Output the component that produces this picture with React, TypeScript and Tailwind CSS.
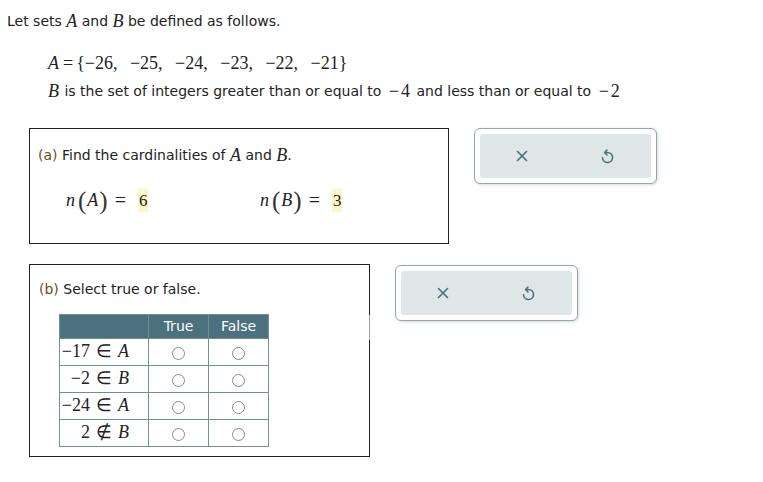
import React from 'react';

const sans = { fontFamily: '"DejaVu Sans", Verdana, sans-serif' };
const serif = { fontFamily: '"Liberation Serif", "Times New Roman", serif' };

function M({ children, italic = false, className = '' }: { children: React.ReactNode; italic?: boolean; className?: string }) {
  return (
    <span className={`text-[18px] leading-none ${italic ? 'italic' : ''} ${className}`} style={serif}>
      {children}
    </span>
  );
}

function Paren({ children }: { children: string }) {
  return (
    <span className="text-[25px] leading-none text-[#333]" style={serif}>
      {children}
    </span>
  );
}

function XIcon() {
  return (
    <svg width="12" height="12" viewBox="0 0 12 12" fill="none" stroke="#4b6f7a" strokeWidth="1.6" strokeLinecap="round">
      <path d="M1.5 1.5 10.5 10.5M10.5 1.5 1.5 10.5" />
    </svg>
  );
}

function UndoIcon() {
  return (
    <svg width="14" height="16" viewBox="0 0 14 16" fill="none" stroke="#4b6f7a" strokeWidth="1.6" strokeLinecap="round" strokeLinejoin="round">
      <path d="M5 4.5h2.5A5 5 0 1 1 2.5 9.8" />
      <path d="M7 2 4.6 4.5 7 7" />
    </svg>
  );
}

function ActionButtons({ className = '' }: { className?: string }) {
  return (
    <div className={`h-[56px] w-[183px] rounded-[6px] border border-[#92a7ae] bg-white p-[5px] shadow-[1px_1px_3px_rgba(0,0,0,0.15)] ${className}`}>
      <div className="flex h-full items-center rounded-[3px] bg-[#dfe6e8]">
        <div className="flex flex-1 justify-center">
          <XIcon />
        </div>
        <div className="flex flex-1 justify-center pr-[2px]">
          <UndoIcon />
        </div>
      </div>
    </div>
  );
}

function Radio() {
  return <span className="inline-block size-[13px] rounded-full border border-[#8a8a8a] bg-white" />;
}

function Cardinality({ set, value, className = '' }: { set: string; value: string; className?: string }) {
  return (
    <div className={`flex items-center ${className}`}>
      <M italic>n</M>
      <span className="ml-[3px]" />
      <Paren>(</Paren>
      <M italic className="mx-[1px]">{set}</M>
      <Paren>)</Paren>
      <span className="ml-[7px] mr-[12px] text-[20px] leading-none" style={serif}>=</span>
      <span className="bg-[#fdf6c9] px-[1px] py-[3px] text-[17px] leading-none" style={serif}>{value}</span>
    </div>
  );
}

const rows: { lhs: string; rel: string; set: string }[] = [
  { lhs: '−17', rel: '∈', set: 'A' },
  { lhs: '−2', rel: '∈', set: 'B' },
  { lhs: '−24', rel: '∈', set: 'A' },
  { lhs: '2', rel: '∉', set: 'B' },
];

export default function App() {
  return (
    <div className="h-[482px] w-[763px] bg-white text-[14px] text-[#222]" style={sans}>
      <div className="mt-[10px] flex h-[22px] items-center whitespace-pre pl-[7px]">
        <span>Let sets </span>
        <M italic>A</M>
        <span> and </span>
        <M italic>B</M>
        <span> be defined as follows.</span>
      </div>

      <div className="mt-[20px] flex h-[22px] items-center pl-[48px]">
        <M italic>A</M>
        <M className="ml-[4px]">=</M>
        <M className="ml-[3px] [word-spacing:8px]">{'{'}−26, −25, −24, −23, −22, −21{'}'}</M>
      </div>
      <div className="mt-[6px] flex h-[22px] items-center whitespace-pre pl-[48px]">
        <M italic>B</M>
        <span className="ml-[1px]"> is the set of integers greater than or equal to </span>
        <M className="ml-[3px]">−</M>
        <M className="ml-[2px]">4</M>
        <span className="ml-[2px]"> and less than or equal to </span>
        <M className="ml-[3px]">−</M>
        <M className="ml-[2px]">2</M>
      </div>

      <div className="mt-[26px] flex items-start gap-[25px] pl-[29px]">
        <div className="h-[116px] w-[420px] border border-[#222]">
          <div className="mt-[15px] flex h-[22px] items-center whitespace-pre pl-[8px]">
            <span className="text-[#6b4e12]">(a)</span>
            <span> Find the cardinalities of </span>
            <M italic>A</M>
            <span> and </span>
            <M italic>B</M>
            <span>.</span>
          </div>
          <div className="mt-[21px] flex h-[26px]">
            <Cardinality set="A" value="6" className="w-[230px] pl-[36px]" />
            <Cardinality set="B" value="3" />
          </div>
        </div>
        <ActionButtons />
      </div>

      <div className="mt-[20px] flex items-start gap-[25px] pl-[29px]">
        <div className="relative h-[193px] w-[341px] border border-[#222]">
          <span className="absolute -right-px top-[50px] h-[25px] w-px bg-[#9aa8ad]" />
          <div className="mt-[13px] h-[22px] pl-[9px] leading-[22px]">
            <span className="text-[#6b4e12]">(b)</span> Select true or false.
          </div>
          <table className="ml-[29px] mt-[14px] border-collapse">
            <thead>
              <tr className="h-[24px] bg-[#4a717d] text-[14px] text-white">
                <th className="w-[89px] border border-[#6f9099]" />
                <th className="w-[60px] border border-[#6f9099] font-normal">True</th>
                <th className="w-[60px] border border-[#6f9099] font-normal">False</th>
              </tr>
            </thead>
            <tbody>
              {rows.map((r) => (
                <tr key={r.lhs} className="h-[27px]">
                  <td className="whitespace-nowrap border border-[#6f9099] pr-[19px] text-right">
                    <M>{r.lhs}</M>
                    <M className="mx-[6px] text-[16px]">{r.rel}</M>
                    <M italic>{r.set}</M>
                  </td>
                  <td className="border border-[#6f9099] text-center">
                    <div className="flex justify-center pt-[3px]">
                      <Radio />
                    </div>
                  </td>
                  <td className="border border-[#6f9099] text-center">
                    <div className="flex justify-center pt-[3px]">
                      <Radio />
                    </div>
                  </td>
                </tr>
              ))}
            </tbody>
          </table>
        </div>
        <ActionButtons className="mt-px" />
      </div>
    </div>
  );
}
